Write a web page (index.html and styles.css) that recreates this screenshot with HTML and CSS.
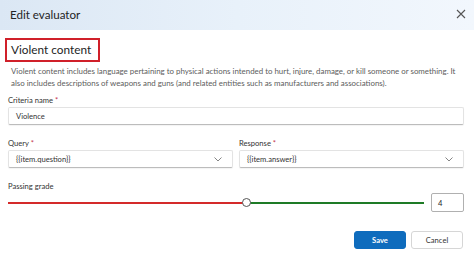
FILE: index.html
```html
<!DOCTYPE html>
<html>
<head>
<meta charset="utf-8">
<link rel="stylesheet" href="styles.css">
</head>
<body>
<div class="dialog">
  <div class="header">
    <span class="title">Edit evaluator</span>
    <svg class="close" width="10" height="10" viewBox="0 0 10 10"><path d="M1 1L9 9M9 1L1 9" stroke="#555" stroke-width="1.1" fill="none"/></svg>
  </div>
  <div class="body">
    <div class="section-title"><span class="highlight">Violent content</span></div>
    <p class="desc">Violent content includes language pertaining to physical actions intended to hurt, injure, damage, or kill someone or something. It also includes descriptions of weapons and guns (and related entities such as manufacturers and associations).</p>
    <div class="field">
      <label class="label">Criteria name <span class="req">*</span></label>
      <div class="input">Violence</div>
    </div>
    <div class="row">
      <div class="field">
        <label class="label">Query <span class="req">*</span></label>
        <div class="input select">{{item.question}}<svg class="chev" width="8" height="5" viewBox="0 0 8 5"><path d="M0.5 0.5L4 4L7.5 0.5" stroke="#777" stroke-width="0.9" fill="none"/></svg></div>
      </div>
      <div class="field">
        <label class="label">Response <span class="req">*</span></label>
        <div class="input select">{{item.answer}}<svg class="chev" width="8" height="5" viewBox="0 0 8 5"><path d="M0.5 0.5L4 4L7.5 0.5" stroke="#777" stroke-width="0.9" fill="none"/></svg></div>
      </div>
    </div>
    <div class="field">
      <label class="label">Passing grade</label>
      <div class="slider-row">
        <div class="slider">
          <div class="track-red" style="width:56.6%"></div>
          <div class="thumb"></div>
          <div class="track-green"></div>
        </div>
        <div class="num">4</div>
      </div>
    </div>
    <div class="actions">
      <button class="btn primary">Save</button>
      <button class="btn">Cancel</button>
    </div>
  </div>
</div>
</body>
</html>
```
FILE: styles.css
```css
* { box-sizing: border-box; }
html, body { margin: 0; padding: 0; background: #fff; }
body { font-family: Lato, "Open Sans", sans-serif; color: #242424; width: 474px; height: 261px; overflow: hidden; }
.dialog { display: flex; flex-direction: column; }
.header {
  height: 30px;
  background: linear-gradient(90deg, #dbe7f4 0%, #e8f1fa 50%, #f2f7fd 100%);
  display: flex; align-items: center; justify-content: space-between;
  padding: 0 8px 0 10px;
}
.title { font-size: 11.6px; color: #242424; margin-top: -2px; }
.close { margin-top: -2px; }
.body { padding: 8px 10px 0 8px; }
.highlight {
  display: inline-block;
  margin-left: -3px;
  border: 2px solid #d0202a;
  padding: 0 7px 0 4px;
  height: 24px;
  font-size: 11.8px;
  line-height: 20px;
  color: #242424;
}
.desc { margin: 3px 0 0 3px; font-size: 7.9px; line-height: 12px; color: #5c5c5c; }
.field { display: flex; flex-direction: column; }
.label { font-size: 7.6px; color: #333; line-height: 10px; margin: 6px 0 2px 0; }
.req { color: #c4314b; }
.input {
  height: 18px;
  border: 1px solid #e3e3e3;
  border-bottom-color: #bcbcbc;
  border-radius: 2px;
  font-size: 7.6px;
  color: #333;
  display: flex; align-items: center; justify-content: space-between;
  padding: 0 10px 0 7px;
  box-shadow: 0 1px 1px rgba(0,0,0,0.05);
}
.row { display: grid; grid-template-columns: 1fr 1fr; gap: 6px; }
.row .label { margin-top: 13px; }
.row + .field .label { margin-top: 13px; }
.slider-row { display: flex; align-items: center; gap: 7px; margin-top: 0; }
.slider { flex: 1; display: flex; align-items: center; height: 19px; }
.track-red { height: 2px; background: #d42a2a; }
.thumb { width: 9px; height: 9px; border: 1.3px solid #555; border-radius: 50%; background: #fff; flex-shrink: 0; margin: 0 -1px; position: relative; z-index: 1; }
.track-green { flex: 1; height: 2px; background: #1e7b26; }
.num {
  width: 33px; height: 19px; border: 1px solid #b0b0b0; border-radius: 2px;
  font-size: 7.6px; display: flex; align-items: center; padding-left: 6px;
}
.actions { display: flex; justify-content: flex-end; gap: 5px; margin-top: 19px; padding-right: 1px; }
.btn {
  width: 52px; height: 18px; border: 1px solid #d6d6d6; border-radius: 3px; background: #fff;
  font-family: inherit; font-size: 7.6px; color: #333; padding: 0;
}
.btn.primary { background: #0f6cbd; border-color: #0f6cbd; color: #fff; font-weight: 700; }
```
